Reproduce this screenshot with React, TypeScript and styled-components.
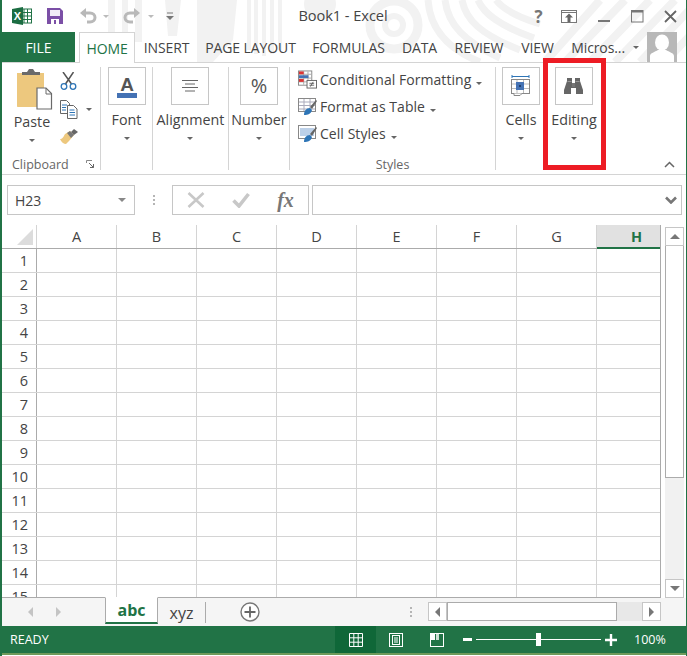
import React from "react";
import styled, { createGlobalStyle } from "styled-components";

const FONT = `"Open Sans", "Noto Sans", "Liberation Sans", sans-serif`;
const GREEN = "#217346";
const INK = "#444444";
const LINE = "#d4d4d4";

const Global = createGlobalStyle`
  html, body { margin: 0; padding: 0; background: #fff; }
  * { box-sizing: border-box; }
`;

const Win = styled.div`
  position: relative;
  width: 687px;
  height: 656px;
  overflow: hidden;
  display: flex;
  flex-direction: column;
  background: #fff;
  border-left: 2px solid ${GREEN};
  border-right: 1px solid ${GREEN};
  font-family: ${FONT};
  color: ${INK};
`;

const Backdrop = styled.svg`
  position: absolute;
  left: -2px;
  top: 0;
  pointer-events: none;
`;

const TitleBar = styled.div`
  position: relative;
  height: 32px;
  display: grid;
  grid-template-columns: 1fr auto 1fr;
  align-items: center;
`;
const Qat = styled.div`
  display: flex;
  align-items: center;
`;
const QatSlot = styled.div<{ $w: number }>`
  width: ${(p) => p.$w}px;
  height: 32px;
  display: flex;
  align-items: center;
  justify-content: flex-start;
`;
const Title = styled.div`
  font-size: 14.6px;
  letter-spacing: -0.05px;
  color: #444;
  padding-bottom: 3px;
  margin-right: 2px;
`;
const WinCtl = styled.div`
  display: flex;
  align-items: center;
  justify-content: flex-end;
  padding-right: 1px;
`;
const WinSlot = styled.div<{ $w: number }>`
  width: ${(p) => p.$w}px;
  height: 32px;
  display: flex;
  align-items: center;
  justify-content: center;
  font-weight: 700;
  font-size: 17px;
  color: #777;
`;

const TabRow = styled.div`
  position: relative;
  height: 31px;
  display: flex;
  align-items: stretch;
  border-bottom: 1px solid ${LINE};
`;
const FileTab = styled.div`
  width: 73px;
  margin-right: 4px;
  height: 30px;
  background: ${GREEN};
  color: #fff;
  font-size: 14px;
  display: flex;
  align-items: center;
  justify-content: center;
`;
const Tab = styled.div<{ $w: number; $active?: boolean }>`
  width: ${(p) => p.$w}px;
  height: ${(p) => (p.$active ? 31 : 30)}px;
  font-size: 14px;
  letter-spacing: -0.1px;
  display: flex;
  align-items: center;
  justify-content: center;
  white-space: nowrap;
  color: ${(p) => (p.$active ? GREEN : INK)};
  background: ${(p) => (p.$active ? "#fff" : "transparent")};
  border: ${(p) => (p.$active ? `1px solid ${LINE}` : "none")};
  border-bottom: none;
`;
const Account = styled.div`
  display: flex;
  align-items: center;
  font-size: 14px;
  letter-spacing: -0.1px;
  margin-left: auto;
  padding-right: 9px;
  gap: 8px;
`;

const Ribbon = styled.div`
  position: relative;
  height: 112px;
  display: flex;
  align-items: stretch;
  border-bottom: 1px solid ${LINE};
  padding-top: 4px;
  padding-bottom: 1px;
`;
const Group = styled.div<{ $w: number; $last?: boolean }>`
  width: ${(p) => p.$w}px;
  flex: none;
  display: flex;
  flex-direction: column;
  align-items: center;
  margin-bottom: 3px;
  border-right: ${(p) => (p.$last ? "none" : `1px solid ${LINE}`)};
`;
const LargeBtn = styled.div`
  display: flex;
  flex-direction: column;
  align-items: center;
  flex: none;
`;
const IconBox = styled.div`
  width: 38px;
  height: 38px;
  border: 1px solid #c6c6c6;
  display: flex;
  align-items: center;
  justify-content: center;
`;
const PercentGlyph = styled.span`
  font-size: 20px;
  line-height: 1;
  color: #555;
`;
const BtnLabel = styled.div`
  font-size: 14.3px;
  line-height: 20px;
  margin-top: 5px;
  white-space: nowrap;
`;
const Caret = styled.span<{ $c?: string }>`
  display: inline-block;
  flex: none;
  width: 0;
  height: 0;
  border-left: 3px solid transparent;
  border-right: 3px solid transparent;
  border-top: 3px solid ${(p) => p.$c ?? "#666"};
`;
const CaretLine = styled.div`
  height: 17px;
  display: flex;
  align-items: center;
  justify-content: center;
`;
const ClipBody = styled.div`
  display: flex;
  width: 100%;
  height: 90px;
  padding-left: 15px;
`;
const PasteCol = styled.div`
  width: 36px;
  display: flex;
  flex-direction: column;
  align-items: center;
  padding-top: 2px;
`;
const PasteLabel = styled.div`
  font-size: 14.3px;
  line-height: 20px;
  margin: 2px 6px 0 0;
`;
const PasteCaret = styled(CaretLine)`
  margin-right: 6px;
`;
const SmallCol = styled.div`
  margin-left: 7px;
  display: flex;
  flex-direction: column;
  padding-top: 4px;
  gap: 8px;
`;
const SmallRow = styled.div`
  height: 20px;
  display: flex;
  align-items: center;
  gap: 8px;
`;
const GroupFoot = styled.div`
  margin-top: auto;
  margin-bottom: -3px;
  width: 100%;
  height: 18px;
  display: flex;
  align-items: center;
  justify-content: center;
  font-size: 12.5px;
  color: #666;
  position: relative;
`;
const ClipFoot = styled(GroupFoot)`
  justify-content: flex-start;
  padding-left: 10px;
  gap: 17px;
`;
const StyleList = styled.div`
  width: 100%;
  padding: 1px 0 0 8px;
  display: flex;
  flex-direction: column;
  gap: 5px;
`;
const StyleRow = styled.div`
  height: 22px;
  display: flex;
  align-items: center;
  gap: 3px;
  font-size: 14px;
  letter-spacing: 0.05px;
  white-space: nowrap;
  & > span { margin-left: 2px; }
`;
const Collapse = styled.svg`
  position: absolute;
  right: 11px;
  bottom: 6px;
`;
const Highlight = styled.div`
  position: absolute;
  left: 541px;
  top: 58px;
  width: 63px;
  height: 112px;
  border: 5px solid #ed1c24;
`;

const FormulaBar = styled.div`
  height: 50px;
  padding: 10px 4px 10px 5px;
  display: flex;
  align-items: stretch;
`;
const NameBox = styled.div`
  width: 128px;
  border: 1px solid #c6c6c6;
  display: flex;
  align-items: center;
  justify-content: space-between;
  padding: 0 8px 0 7px;
  font-size: 14px;
`;
const Dots = styled.div`
  width: 37px;
  display: flex;
  flex-direction: column;
  align-items: center;
  justify-content: center;
  gap: 2px;
  & > i { width: 2px; height: 2px; background: #b5b5b5; display: block; }
`;
const FxBox = styled.div`
  width: 137px;
  border: 1px solid #c6c6c6;
  display: flex;
  align-items: center;
`;
const FxSlot = styled.div<{ $w: number }>`
  width: ${(p) => p.$w}px;
  display: flex;
  justify-content: center;
  align-items: center;
`;
const FxGlyph = styled.span`
  font-family: "Liberation Serif", serif;
  font-style: italic;
  font-weight: 700;
  font-size: 20px;
  color: #777;
`;
const FormulaInput = styled.div`
  flex: 1;
  margin-left: 3px;
  border: 1px solid #c6c6c6;
  display: flex;
  align-items: center;
  justify-content: flex-end;
  padding-right: 4px;
`;

const SheetArea = styled.div`
  height: 373px;
  display: flex;
  align-items: stretch;
`;
const Grid = styled.div`
  width: 659px;
  overflow: hidden;
  border-right: 1px solid #ababab;
  display: flex;
  flex-direction: column;
`;
const HeadRow = styled.div`
  height: 24px;
  flex: none;
  display: flex;
  border-bottom: 1px solid #ababab;
`;
const Corner = styled.div`
  width: 35px;
  flex: none;
  display: flex;
  align-items: flex-end;
  justify-content: flex-end;
  padding: 0 3px 3px 0;
  border-right: 1px solid ${LINE};
`;
const ColHead = styled.div<{ $sel?: boolean }>`
  width: 80px;
  flex: none;
  border-right: 1px solid ${LINE};
  font-size: 14.5px;
  font-weight: ${(p) => (p.$sel ? 700 : 400)};
  color: ${(p) => (p.$sel ? GREEN : INK)};
  background: ${(p) => (p.$sel ? "#e1e1e1" : "#fff")};
  display: flex;
  align-items: center;
  justify-content: center;
  ${(p) => (p.$sel ? `box-shadow: inset 0 -2px 0 ${GREEN}; margin-bottom: -1px; padding-bottom: 1px;` : "")}
`;
const Row = styled.div`
  height: 24px;
  flex: none;
  display: flex;
  border-bottom: 1px solid ${LINE};
`;
const RowNum = styled.div`
  width: 35px;
  flex: none;
  border-right: 1px solid #ababab;
  font-size: 14.5px;
  padding-right: 8px;
  text-align: right;
  line-height: 24px;
`;
const Cell = styled.div`
  width: 80px;
  flex: none;
  border-right: 1px solid ${LINE};
`;
const VScroll = styled.div`
  width: 24px;
  padding: 2px 0 0 4px;
  display: flex;
  flex-direction: column;
`;
const ScrollBtn = styled.div`
  width: 19px;
  height: 19px;
  flex: none;
  border: 1px solid #c6c6c6;
  display: flex;
  align-items: center;
  justify-content: center;
  background: #fff;
`;
const VThumb = styled.div`
  width: 19px;
  height: 232px;
  flex: none;
  border: 1px solid #ababab;
  border-top: none;
  background: #fff;
`;
const VTrack = styled.div`
  width: 19px;
  flex: 1;
  background: #f1f1f1;
`;
const Tri = styled.span<{ $dir: "up" | "down" | "left" | "right"; $c?: string; $s?: number }>`
  display: block;
  width: 0;
  height: 0;
  ${(p) => {
    const c = p.$c ?? "#777";
    const s = p.$s ?? 5;
    if (p.$dir === "up") return `border-left:${s}px solid transparent;border-right:${s}px solid transparent;border-bottom:${s}px solid ${c};`;
    if (p.$dir === "down") return `border-left:${s}px solid transparent;border-right:${s}px solid transparent;border-top:${s}px solid ${c};`;
    if (p.$dir === "left") return `border-top:${s}px solid transparent;border-bottom:${s}px solid transparent;border-right:${s}px solid ${c};`;
    return `border-top:${s}px solid transparent;border-bottom:${s}px solid transparent;border-left:${s}px solid ${c};`;
  }}
`;

const SheetBar = styled.div`
  height: 29px;
  background: #f5f5f5;
  border-top: 1px solid #ababab;
  margin-right: 25px;
  display: flex;
  align-items: flex-start;
  margin-top: -1px;
  position: relative;
`;
const SheetBarWrap = styled.div`
  height: 28px;
  background: #f5f5f5;
`;
const NavArrows = styled.div`
  width: 103px;
  height: 28px;
  display: flex;
  align-items: center;
  padding-left: 26px;
  gap: 23px;
`;
const SheetTab = styled.div<{ $active?: boolean }>`
  width: ${(p) => (p.$active ? 53 : 48)}px;
  font-size: 16px;
  display: flex;
  align-items: center;
  justify-content: center;
  font-weight: ${(p) => (p.$active ? 700 : 400)};
  color: ${(p) => (p.$active ? GREEN : INK)};
  background: ${(p) => (p.$active ? "#fff" : "transparent")};
  border-left: ${(p) => (p.$active ? "1px solid #ababab" : "none")};
  border-right: 1px solid #ababab;
  border-bottom: ${(p) => (p.$active ? `2px solid ${GREEN}` : "none")};
  ${(p) => (p.$active ? "height: 27px; margin-top: -1px; border-top: 1px solid #fff;" : "height: 21px; margin-top: 4px;")}
`;
const AddSheet = styled.div`
  width: 20px;
  height: 20px;
  margin: 4px 0 0 34px;
`;
const TabDots = styled(Dots)`
  width: 7px;
  height: 21px;
  margin: 3px 0 0 147px;
`;
const HScroll = styled.div`
  display: flex;
  margin: 4px 0 0 14px;
  height: 19px;
  width: 233px;
`;
const HBtn = styled(ScrollBtn)``;
const HThumb = styled.div`
  width: 170px;
  border: 1px solid #ababab;
  background: #fff;
`;
const HTrack = styled.div`
  flex: 1;
  background: #e8e8e8;
`;

const Status = styled.div`
  height: 27px;
  background: ${GREEN};
  color: #fff;
  display: flex;
  align-items: center;
  font-size: 12.5px;
  padding-left: 8px;
`;
const StatusLeft = styled.div`
  width: 325px;
`;
const ViewBtn = styled.div<{ $on?: boolean; $w: number }>`
  width: ${(p) => p.$w}px;
  height: 27px;
  flex: none;
  display: flex;
  align-items: center;
  justify-content: center;
  background: ${(p) => (p.$on ? "#0f6738" : "transparent")};
`;
const Zoom = styled.div`
  margin-left: 5px;
  display: flex;
  align-items: center;
`;
const Slider = styled.div`
  position: relative;
  width: 125px;
  height: 1px;
  background: #fff;
  margin: 0 4px 0 4px;
`;
const Knob = styled.div`
  position: absolute;
  left: 60px;
  top: -6px;
  width: 5px;
  height: 13px;
  background: #fff;
`;
const Pct = styled.div`
  margin-left: 17px;
  font-size: 12.5px;
`;
const BottomEdge = styled.div`
  height: 2px;
  background: #6f9a5a;
`;

const ExcelIcon = () => (
  <svg width="20" height="18" viewBox="0 0 20 18">
    <rect x="8" y="2" width="11.500" height="14" fill="#fff" stroke="#217346" />
    <path d="M12 2v14M15.500 2v14M9 5.500h11M9 9h11M9 12.500h11" stroke="#217346" strokeWidth="1" />
    <path d="M0 2 11 0v18L0 16Z" fill="#1c6d42" />
    <text x="1.800" y="13.200" fontFamily="Liberation Sans" fontWeight="700" fontSize="11" fill="#fff">X</text>
  </svg>
);
const SaveIcon = () => (
  <svg width="16" height="16" viewBox="0 0 16 16">
    <path d="M0 0h13l3 3v13H0Z" fill="#7b4fa6" />
    <rect x="3" y="2" width="10" height="6" fill="#f1ecf6" />
    <rect x="4" y="11" width="8" height="5" fill="#fff" />
    <rect x="7" y="12" width="2" height="4" fill="#7b4fa6" />
  </svg>
);
const UndoIcon = ({ flip }: { flip?: boolean }) => (
  <svg width="18" height="16" viewBox="0 0 18 16" style={flip ? { transform: "scaleX(-1)" } : undefined}>
    <path d="M3 5h8c3 0 5 2 5 4.500S14 14 11 14H8" fill="none" stroke="#b9b9b9" strokeWidth="3" />
    <path d="M7 0v10L1 5Z" fill="#b9b9b9" />
  </svg>
);
const QatMore = () => (
  <svg width="8" height="8" viewBox="0 0 8 8">
    <path d="M1 1h6" stroke="#777" />
    <path d="M0 4h8L4 8Z" fill="#777" />
  </svg>
);
const RibbonDisplay = () => (
  <svg width="16" height="13" viewBox="0 0 16 13">
    <rect x=".5" y=".5" width="15" height="12" fill="none" stroke="#777" />
    <path d="M1 2.500h14" stroke="#777" />
    <path d="M8 3.500 4 7.500h2.500V12h3V7.500H12Z" fill="#666" />
  </svg>
);
const MinIcon = () => (
  <svg width="14" height="14" viewBox="0 0 14 14"><rect x="1" y="11" width="12" height="2" fill="#777" /></svg>
);
const MaxIcon = () => (
  <svg width="13" height="13" viewBox="0 0 13 13">
    <rect x=".5" y=".5" width="11.500" height="11.500" fill="none" stroke="#777" />
    <rect x="0" y="0" width="12" height="2.500" fill="#777" />
  </svg>
);
const CloseIcon = () => (
  <svg width="13" height="13" viewBox="0 0 13 13">
    <path d="M1 1 12 12M12 1 1 12" stroke="#666" strokeWidth="1.800" />
  </svg>
);
const Avatar = () => (
  <svg width="30" height="30" viewBox="0 0 30 30">
    <rect width="30" height="30" fill="#b8b8b8" />
    <ellipse cx="15" cy="10.500" rx="7" ry="8" fill="#fff" />
    <path d="M3 30v-6c0-3 5-4 8-6h8c3 2 8 3 8 6v6Z" fill="#fff" />
    <path d="M11 19h8l-2 3h-4Z" fill="#fff" />
  </svg>
);

const PasteIcon = () => (
  <svg width="36" height="41" viewBox="0 0 36 41">
    <path d="M0 4h27v20h-6v14H1c-.6 0-1-.4-1-1Z" fill="#edc87e" />
    <path d="M5 6V3h5l2-3h4l2 3h5v3Z" fill="#6a6a6a" />
    <path d="M20 19h9l5.500 5.500V40H20Z" fill="#fff" stroke="#6a6a6a" strokeWidth="1.200" />
    <path d="M29 19v6h5.500" fill="none" stroke="#6a6a6a" />
  </svg>
);
const CutIcon = () => (
  <svg width="17" height="18" viewBox="0 0 17 18">
    <path d="M3 0 11.500 12M13.500 0 5.500 12" stroke="#555" strokeWidth="1.500" />
    <circle cx="4" cy="14.500" r="2.800" fill="none" stroke="#2e75b6" strokeWidth="1.300" />
    <circle cx="13" cy="14.500" r="2.800" fill="none" stroke="#2e75b6" strokeWidth="1.300" />
  </svg>
);
const CopyIcon = () => (
  <svg width="18" height="19" viewBox="0 0 18 19">
    <path d="M.5.500h6l3 3v10h-9Z" fill="#fff" stroke="#666" />
    <path d="M7.500 5.500h6l3.500 3.500v9.500H7.500Z" fill="#fff" stroke="#666" />
    <path d="M2 5h5M2 7.500h4M2 10h4M9.500 10h5M9.500 12.500h5.500M9.500 15h5.500" stroke="#2e75b6" />
  </svg>
);
const BrushIcon = () => (
  <svg width="18" height="16" viewBox="0 0 18 16">
    <path d="M5 5 10 2l4 4-5 6-3 3c-2 0-5-2-6-5 2 0 3-1 5-5Z" fill="#edc87e" />
    <path d="M7 4 10 2l4 4-3 3Z" fill="#777" />
    <path d="M11 3 14 0l4 3-4 3Z" fill="#666" />
  </svg>
);
const FontIcon = () => (
  <svg width="22" height="24" viewBox="0 0 22 24">
    <text x="11" y="17" textAnchor="middle" fontFamily="Liberation Sans" fontWeight="700" fontSize="19" fill="#555">A</text>
    <rect x="1" y="19" width="20" height="5" fill="#4472b4" />
  </svg>
);
const AlignIcon = () => (
  <svg width="18" height="12" viewBox="0 0 18 12">
    <path d="M1 .500h16M4 4h10M1 7.500h16M4 11h10" stroke="#666" />
  </svg>
);
const CondIcon = () => (
  <svg width="19" height="19" viewBox="0 0 20 19">
    <rect x=".5" y=".5" width="14" height="15" fill="#fff" stroke="#888" />
    <path d="M6 1v14M10.500 1v14M1 4h13M1 8h13M1 12h13" stroke="#aaa" />
    <rect x="1" y="1" width="5" height="3" fill="#d33" />
    <rect x="1" y="5" width="10" height="3" fill="#4472b4" />
    <rect x="1" y="9" width="5" height="3" fill="#d33" />
    <rect x="9.500" y="10.500" width="10" height="8" fill="#fff" stroke="#666" />
    <path d="M12 13.500h5M12 15.500h5M16 12l-3 5" stroke="#444" strokeWidth=".8" fill="none" />
  </svg>
);
const TableIcon = ({ cell }: { cell?: boolean }) => (
  <svg width="19" height="19" viewBox="0 0 19 19">
    <rect x=".5" y="1.500" width="17" height="13" fill="#fff" stroke="#888" />
    {cell ? (
      <rect x="2" y="4" width="14" height="8" fill="#bcd0e8" />
    ) : (
      <path d="M1 5h16M1 8.500h16M1 12h16M6 2v12M12 2v12" stroke="#aab" />
    )}
    <path d="M12 10 18 3l1 1-5 8Z" fill="#666" />
    <path d="M6 18c0-4 2-7 6-7l2 2c-1 4-4 5-8 5Z" fill="#2e75b6" />
  </svg>
);
const CellsIcon = () => (
  <svg width="20" height="22" viewBox="0 0 20 22">
    <path d="M1 1.500h17M1 0v3M18 0v3" stroke="#2e75b6" />
    <rect x=".5" y="4.500" width="18" height="14" fill="#fff" stroke="#888" />
    <path d="M6 5v13M12.500 5v13M1 9h17M1 13.500h17" stroke="#bbb" />
    <rect x="5" y="7" width="8" height="8" fill="#4472b4" />
    <rect x="8" y="10" width="2" height="2" fill="#223f6d" />
    <path d="M3 18.500v2h6l2-2" fill="#fff" stroke="#888" />
  </svg>
);
const BinocIcon = () => (
  <svg width="19" height="16" viewBox="0 0 19 16">
    <path d="M3 0h5v5h3V0h5v3l3 9v4h-7V10H7v6H0v-4l3-9Z" fill="#666" />
    <rect x="8" y="0" width="3" height="5" fill="#fff" />
    <rect x="8" y="5" width="3" height="4" fill="#777" />
    <rect x="3.500" y="3" width="4" height="1" fill="#999" />
    <rect x="11.500" y="3" width="4" height="1" fill="#999" />
  </svg>
);
const CrossIcon = () => (
  <svg width="18" height="16" viewBox="0 0 18 16">
    <path d="M1.500 1 16.500 15M16.500 1 1.500 15" stroke="#c8c8c8" strokeWidth="2.600" />
  </svg>
);
const CheckIcon = () => (
  <svg width="18" height="16" viewBox="0 0 18 16">
    <path d="M1.500 8.500 7 14 16.500 2" fill="none" stroke="#c8c8c8" strokeWidth="3.600" />
  </svg>
);
const Chevron = () => (
  <svg width="12" height="8" viewBox="0 0 12 8">
    <path d="M1 1.500 6 6.500 11 1.500" fill="none" stroke="#777" strokeWidth="2.600" />
  </svg>
);
const CornerTri = () => (
  <svg width="16" height="16" viewBox="0 0 16 16"><path d="M16 0V16H0Z" fill="#dcdcdc" /></svg>
);
const PlusCircle = () => (
  <svg width="20" height="20" viewBox="0 0 20 20">
    <circle cx="10" cy="10" r="9" fill="#fff" stroke="#777" strokeWidth="1.400" />
    <path d="M10 4.500v11M4.500 10h11" stroke="#666" strokeWidth="1.800" />
  </svg>
);
const GridView = () => (
  <svg width="14" height="14" viewBox="0 0 14 14">
    <path d="M.5.500h13v13H.5ZM.5 4.800h13M.5 9.200h13M4.800.5v13M9.200.5v13" fill="none" stroke="#fff" />
  </svg>
);
const PageView = () => (
  <svg width="14" height="14" viewBox="0 0 14 14">
    <rect x=".5" y=".5" width="13" height="13" fill="none" stroke="#fff" />
    <rect x="3.500" y="2.500" width="7" height="9" fill="none" stroke="#fff" />
    <path d="M5 5h4M5 7h4M5 9h4" stroke="#fff" />
  </svg>
);
const BreakView = () => (
  <svg width="14" height="14" viewBox="0 0 14 14">
    <rect x=".5" y=".5" width="13" height="13" fill="none" stroke="#fff" />
    <rect x="1" y="1" width="4" height="6" fill="#fff" />
    <rect x="6" y="1" width="3" height="6" fill="#cfe0d6" />
  </svg>
);
const ZoomOut = () => (
  <svg width="9" height="3" viewBox="0 0 9 3"><rect width="9" height="3" fill="#fff" /></svg>
);
const ZoomIn = () => (
  <svg width="12" height="12" viewBox="0 0 12 12"><path d="M6 0v12M0 6h12" stroke="#fff" strokeWidth="2.400" /></svg>
);

const PATTERN_FILL = "#f2f2f2";
const BackArt = () => (
  <Backdrop width="687" height="62" viewBox="0 0 687 62">
    <g fill={PATTERN_FILL}>
      <rect x="108" y="0" width="7" height="34" />
      <rect x="122" y="0" width="6" height="38" />
      <rect x="135" y="0" width="7" height="42" />
      <path d="M165 0h16l-4 36h-9Z" />
      <path d="M197 0h40l-4 40-20 22h-16Z" />
      <rect x="247" y="0" width="4" height="50" />
      <rect x="254" y="0" width="4" height="54" />
      <rect x="262" y="0" width="4" height="56" />
      <rect x="270" y="0" width="4" height="54" />
      <rect x="278" y="0" width="4" height="50" />
      <circle cx="320" cy="4" r="16" />
    </g>
    <g fill="none" stroke={PATTERN_FILL}>
      <circle cx="394" cy="25" r="9" strokeWidth="6" />
      <circle cx="394" cy="25" r="24" strokeWidth="9" />
      <path d="M428 0C430 30 450 50 480 62M445 0C448 25 465 42 500 58M462 0C466 20 480 34 520 50M478 0C484 14 500 26 534 38M496 0C502 8 514 16 540 24" strokeWidth="7" />
      <path d="M600 0 545 62M625 0 565 62M650 0 590 62M675 0 615 62M695 4 640 62M700 25 665 62" strokeWidth="8" />
    </g>
  </Backdrop>
);

const columns = ["A", "B", "C", "D", "E", "F", "G", "H"];
const rows = Array.from({ length: 15 }, (_, i) => i + 1);
const tabs: [string, number, boolean?][] = [
  ["HOME", 56, true],
  ["INSERT", 63],
  ["PAGE LAYOUT", 105],
  ["FORMULAS", 91],
  ["DATA", 51],
  ["REVIEW", 68],
  ["VIEW", 49],
];

function LargeButton({ label, children }: { label: string; children: React.ReactNode }) {
  return (
    <LargeBtn>
      <IconBox>{children}</IconBox>
      <BtnLabel>{label}</BtnLabel>
      <CaretLine><Caret /></CaretLine>
    </LargeBtn>
  );
}

export default function App() {
  return (
    <Win>
      <Global />
      <BackArt />
      <TitleBar>
        <Qat>
          <QatSlot $w={10} />
          <QatSlot $w={35}><ExcelIcon /></QatSlot>
          <QatSlot $w={32}><SaveIcon /></QatSlot>
          <QatSlot $w={24}><UndoIcon /></QatSlot>
          <QatSlot $w={20}><Caret $c="#bbb" /></QatSlot>
          <QatSlot $w={25}><UndoIcon flip /></QatSlot>
          <QatSlot $w={18}><Caret $c="#bbb" /></QatSlot>
          <QatSlot $w={12}><QatMore /></QatSlot>
        </Qat>
        <Title>Book1 - Excel</Title>
        <WinCtl>
          <WinSlot $w={23}>?</WinSlot>
          <WinSlot $w={38}><RibbonDisplay /></WinSlot>
          <WinSlot $w={31}><MinIcon /></WinSlot>
          <WinSlot $w={36}><MaxIcon /></WinSlot>
          <WinSlot $w={30}><CloseIcon /></WinSlot>
        </WinCtl>
      </TitleBar>

      <TabRow>
        <FileTab>FILE</FileTab>
        {tabs.map(([t, w, a]) => (
          <Tab key={t} $w={w} $active={a}>{t}</Tab>
        ))}
        <Account>
          <span>Micros...</span>
          <Caret />
          <Avatar />
        </Account>
      </TabRow>

      <Ribbon>
        <Group $w={99}>
          <ClipBody>
            <PasteCol>
              <PasteIcon />
              <PasteLabel>Paste</PasteLabel>
              <PasteCaret><Caret /></PasteCaret>
            </PasteCol>
            <SmallCol>
              <SmallRow><CutIcon /></SmallRow>
              <SmallRow><CopyIcon /><Caret /></SmallRow>
              <SmallRow><BrushIcon /></SmallRow>
            </SmallCol>
          </ClipBody>
          <ClipFoot>
            <span>Clipboard</span>
            <svg width="8" height="8" viewBox="0 0 8 8">
              <path d="M.5 3V.5H6" fill="none" stroke="#888" />
              <path d="M3 3 7.500 7.500M7.500 4v3.500H4" fill="none" stroke="#666" />
            </svg>
          </ClipFoot>
        </Group>
        <Group $w={52}><LargeButton label="Font"><FontIcon /></LargeButton></Group>
        <Group $w={76}><LargeButton label="Alignment"><AlignIcon /></LargeButton></Group>
        <Group $w={61}><LargeButton label="Number"><PercentGlyph>%</PercentGlyph></LargeButton></Group>
        <Group $w={206}>
          <StyleList>
            <StyleRow><CondIcon />Conditional Formatting<span><Caret /></span></StyleRow>
            <StyleRow><TableIcon />Format as Table<span><Caret /></span></StyleRow>
            <StyleRow><TableIcon cell />Cell Styles<span><Caret /></span></StyleRow>
          </StyleList>
          <GroupFoot>Styles</GroupFoot>
        </Group>
        <Group $w={50} $last><LargeButton label="Cells"><CellsIcon /></LargeButton></Group>
        <Group $w={56} $last><LargeButton label="Editing"><BinocIcon /></LargeButton></Group>
        <Collapse width="11" height="7" viewBox="0 0 11 7">
          <path d="M1 6 5.500 1.500 10 6" fill="none" stroke="#666" strokeWidth="1.500" />
        </Collapse>
      </Ribbon>

      <FormulaBar>
        <NameBox>H23<Tri $dir="down" $c="#888" $s={4} /></NameBox>
        <Dots><i /><i /><i /></Dots>
        <FxBox>
          <FxSlot $w={45}><CrossIcon /></FxSlot>
          <FxSlot $w={45}><CheckIcon /></FxSlot>
          <FxSlot $w={45}><FxGlyph>fx</FxGlyph></FxSlot>
        </FxBox>
        <FormulaInput><Chevron /></FormulaInput>
      </FormulaBar>

      <SheetArea>
        <Grid>
          <HeadRow>
            <Corner><CornerTri /></Corner>
            {columns.map((c) => (
              <ColHead key={c} $sel={c === "H"}>{c}</ColHead>
            ))}
          </HeadRow>
          {rows.map((r) => (
            <Row key={r}>
              <RowNum>{r}</RowNum>
              {columns.map((c) => <Cell key={c} />)}
            </Row>
          ))}
        </Grid>
        <VScroll>
          <ScrollBtn><Tri $dir="up" /></ScrollBtn>
          <VThumb />
          <VTrack />
          <ScrollBtn><Tri $dir="down" /></ScrollBtn>
        </VScroll>
      </SheetArea>

      <SheetBarWrap>
        <SheetBar>
          <NavArrows>
            <Tri $dir="left" $c="#c4c4c4" />
            <Tri $dir="right" $c="#c4c4c4" />
          </NavArrows>
          <SheetTab $active>abc</SheetTab>
          <SheetTab>xyz</SheetTab>
          <AddSheet><PlusCircle /></AddSheet>
          <TabDots><i /><i /><i /></TabDots>
          <HScroll>
            <HBtn><Tri $dir="left" /></HBtn>
            <HThumb />
            <HTrack />
            <HBtn><Tri $dir="right" /></HBtn>
          </HScroll>
        </SheetBar>
      </SheetBarWrap>

      <Status>
        <StatusLeft>READY</StatusLeft>
        <ViewBtn $on $w={41}><GridView /></ViewBtn>
        <ViewBtn $w={40}><PageView /></ViewBtn>
        <ViewBtn $w={42}><BreakView /></ViewBtn>
        <Zoom>
          <ZoomOut />
          <Slider><Knob /></Slider>
          <ZoomIn />
        </Zoom>
        <Pct>100%</Pct>
      </Status>
      <BottomEdge />
      <Highlight />
    </Win>
  );
}
